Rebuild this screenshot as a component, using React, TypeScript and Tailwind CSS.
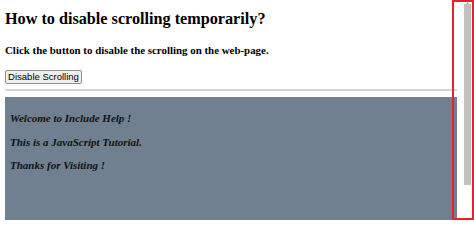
import React from 'react';

const serif = { fontFamily: '"Liberation Serif", "Times New Roman", serif' };

export default function App() {
  return (
    <div className="relative flex h-[220px] w-[474px] overflow-hidden bg-white text-black" style={serif}>
      {/* page */}
      <div className="flex w-[458px] flex-col pl-[5px]">
        <h1 className="mt-[9px] text-[16.2px] font-bold leading-[20px]">How to disable scrolling temporarily?</h1>
        <p className="mt-[14px] text-[10.9px] font-bold leading-[14px]">
          Click the button to disable the scrolling on the web-page.
        </p>
        <div className="mt-[13px] flex">
          <button
            className="h-[14px] w-[77px] rounded-[2px] border border-[#8f8f8f] bg-[#efefef] text-[9.5px] leading-[12px] text-black"
            style={{ fontFamily: '"Liberation Sans", Arial, sans-serif' }}
          >
            Disable Scrolling
          </button>
        </div>
        <hr className="mt-[5px] h-[2px] w-[452px] border-0 bg-[#d4d4d4]" />
        <div className="mt-[6px] flex-1 w-[452px] bg-[#708090] pl-[5px] pt-[14px] text-[11px] font-bold italic leading-[14px] text-[#111]">
          <p>Welcome to Include Help !</p>
          <p className="mt-[9.5px]">This is a JavaScript Tutorial.</p>
          <p className="mt-[9.5px]">Thanks for Visiting !</p>
        </div>
      </div>

      {/* scrollbar */}
      <div className="flex w-[16px] flex-col bg-white">
        <div className="ml-[6px] mt-[1px] h-[3px] w-[7px] text-center text-[4px] leading-[3px] text-[#a0a0a0]">▲</div>
        <div className="ml-[6px] h-[181px] w-[7px] bg-[#c1c1c1]" />
      </div>

      {/* annotation */}
      <div className="absolute left-[452px] top-0 h-[220px] w-[22px] border-2 border-[#e3242b]" />
    </div>
  );
}
